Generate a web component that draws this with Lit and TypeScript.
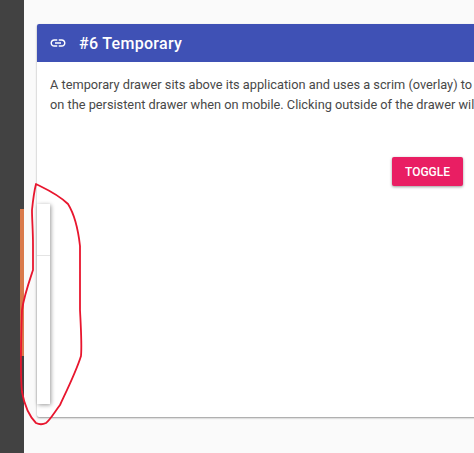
import { LitElement, html, css } from "lit";
import { customElement } from "lit/decorators.js";

@customElement("app-root")
export class AppRoot extends LitElement {
  static styles = css`
    :host { display: block; width: 474px; height: 453px; overflow: hidden; position: relative; font-family: Roboto, sans-serif; background: #fafafa; }
    .layout { display: flex; height: 453px; }
    .rail { width: 24px; flex: none; background: #424242; display: flex; flex-direction: column; align-items: flex-end; }
    .strip { width: 4px; height: 147px; margin-top: 209px; background: #d9794a; }
    main { flex: 1; min-width: 0; padding: 24px 0 0 13px; overflow: hidden; }
    .card { width: 560px; height: 393px; background: #fff; box-shadow: 0 1px 2px rgba(0,0,0,.4); border-radius: 2px 0 0 2px; display: flex; flex-direction: column; }
    header { height: 38px; background: #3f51b5; color: #fff; display: flex; align-items: center; gap: 12px; padding-left: 12px; font-size: 16px; font-weight: 500; letter-spacing: .3px; border-radius: 2px 0 0 0; }
    header svg { width: 18px; height: 18px; fill: #fff; flex: none; }
    .body { padding: 13px 13px 0; font-size: 12.78px; line-height: 19.5px; color: #484848; white-space: nowrap; }
    .body p { margin: 0; }
    .actions { width: 413px; display: flex; justify-content: flex-end; margin-top: 43px; }
    button { width: 71px; height: 29px; border: 0; border-radius: 2px; background: #e91e63; color: #fff; font: 500 12px Roboto, sans-serif; letter-spacing: 0; box-shadow: 0 1px 3px rgba(0,0,0,.4); padding: 0; }
    .drawer { position: absolute; left: 37px; top: 204px; width: 13px; height: 200px; background: #fff; box-shadow: 1px 1px 4px rgba(0,0,0,.4); }
    .drawer div { height: 51px; border-bottom: 1px solid #e4e4e4; }
    .ink { position: absolute; inset: 0; width: 474px; height: 453px; pointer-events: none; }
    .ink path { fill: none; stroke: #e8162e; stroke-width: 1.8; stroke-linejoin: round; stroke-linecap: round; }
  `;

  render() {
    return html`
      <div class="layout">
        <div class="rail"><div class="strip"></div></div>
        <main>
          <section class="card">
            <header>
              <svg viewBox="0 0 24 24"><path d="M3.9 12c0-1.71 1.39-3.1 3.1-3.1h4V7H7c-2.76 0-5 2.24-5 5s2.24 5 5 5h4v-1.9H7c-1.71 0-3.1-1.39-3.1-3.1zM8 13h8v-2H8v2zm9-6h-4v1.9h4c1.71 0 3.1 1.39 3.1 3.1s-1.39 3.1-3.1 3.1h-4V17h4c2.76 0 5-2.24 5-5s-2.24-5-5-5z"/></svg>
              <span>#6 Temporary</span>
            </header>
            <div class="body">
              <p>A temporary drawer sits above its application and uses a scrim (overlay) to darken the content behind it.</p>
              <p>on the persistent drawer when on mobile. Clicking outside of the drawer will close it again.</p>
              <div class="actions"><button>TOGGLE</button></div>
            </div>
          </section>
        </main>
      </div>
      <div class="drawer"><div></div></div>
      <svg class="ink" viewBox="0 0 474 453"><path d="M36 184 C44 188 58 194 68 204 C73 212 78 228 80 246 L80 310 C81 330 82 345 81 356 C76 372 66 392 60 405 C54 413 50 420 46 423 C42 425 38 424 36 423 C31 418 25 408 22 392 C20 375 21 340 22 310 C24 296 29 282 33 270 L33 245 C33 230 32 220 32 210 C33 200 34 192 36 184 Z"/></svg>
    `;
  }
}
